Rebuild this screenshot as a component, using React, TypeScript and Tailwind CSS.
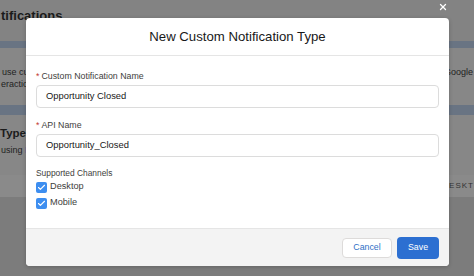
import React from 'react';
import { X, Check } from 'lucide-react';

const font = { fontFamily: '"Liberation Sans", Arial, sans-serif' };

const Channel: React.FC<{ label: string }> = ({ label }) => (
  <label className="flex h-4 items-center gap-[3px]">
    <span className="flex h-[11px] w-[11px] items-center justify-center rounded-[2px] bg-[#3d8ef0]">
      <Check size={9} strokeWidth={3} className="text-white" />
    </span>
    <span className="text-[9.2px] leading-none text-[#3e3e3c]">{label}</span>
  </label>
);

const Field: React.FC<{ label: string; value: string }> = ({ label, value }) => (
  <div>
    <div className="flex h-3 items-center text-[8.8px] leading-none text-[#3e3e3c]">
      <span className="mr-[2px] text-[#c23934]">*</span>
      {label}
    </div>
    <div className="mt-[3px] flex h-[23px] items-center rounded-[4px] border border-[#dcdcdc] bg-white px-[9px] text-[9.4px] text-[#181818]">
      {value}
    </div>
  </div>
);

export default function App() {
  return (
    <div className="relative h-[276px] w-full overflow-hidden bg-[#7c7c7c]" style={font}>
      {/* Page behind the overlay */}
      <div className="flex h-[41px] items-start bg-[#838383] pl-[1px] pt-[8px]">
        <span className="text-[13px] font-bold leading-[15px] text-[#1b1b1b]">tifications</span>
      </div>
      <div className="h-[7px] bg-[#697483]" />
      <div className="flex h-[57px] justify-between bg-[#878787] pt-[18px] text-[9px] leading-[12px] text-[#222]">
        <div>
          <div className="pl-[2px]">use cu</div>
          <div className="pl-[1px]">eractio</div>
        </div>
        <div className="pr-[1px]">Google</div>
      </div>
      <div className="h-[10px] bg-[#697483]" />
      <div className="h-[60px] bg-[#878787] pt-[12px]">
        <div className="text-[11.5px] font-bold leading-[13px] text-[#1b1b1b]">Types</div>
        <div className="mt-[4px] pl-[1px] text-[9px] leading-[12px] text-[#222]">
          using <span className="text-[#1d4f91]">F</span>
        </div>
      </div>
      <div className="flex h-[22px] items-center justify-end bg-[#8a8a8a] text-[8px] tracking-[1px] text-[#333]">
        DESKT
      </div>

      {/* Close */}
      <X size={10} strokeWidth={3} className="absolute left-[438px] top-[2px] text-white" />

      {/* Modal */}
      <div className="absolute left-[26px] top-[18px] w-[423px] overflow-hidden rounded-[4px] bg-white shadow-[0_1px_4px_rgba(0,0,0,0.2)]">
        <div className="flex h-[38px] items-center justify-center border-b border-[#e5e5e5] text-[13.2px] text-[#181818]">
          New Custom Notification Type
        </div>
        <div className="px-[10px] pb-[17px] pt-[14px]">
          <Field label="Custom Notification Name" value="Opportunity Closed" />
          <div className="mt-[11px]">
            <Field label="API Name" value="Opportunity_Closed" />
          </div>
          <div className="mt-[11px] flex h-[11px] items-center text-[8.4px] leading-none text-[#3e3e3c]">
            Supported Channels
          </div>
          <Channel label="Desktop" />
          <Channel label="Mobile" />
        </div>
        <div className="flex h-[38px] items-center justify-end gap-[5px] border-t border-[#e5e5e5] bg-[#f3f3f3] pr-[10px]">
          <button className="h-[20px] w-[50px] rounded-[4px] border border-[#dddbda] bg-white text-[8.8px] text-[#2f6fc6]">
            Cancel
          </button>
          <button className="h-[22px] w-[42px] rounded-[4px] bg-[#2c6fd1] text-[8.8px] text-white">
            Save
          </button>
        </div>
      </div>
    </div>
  );
}
